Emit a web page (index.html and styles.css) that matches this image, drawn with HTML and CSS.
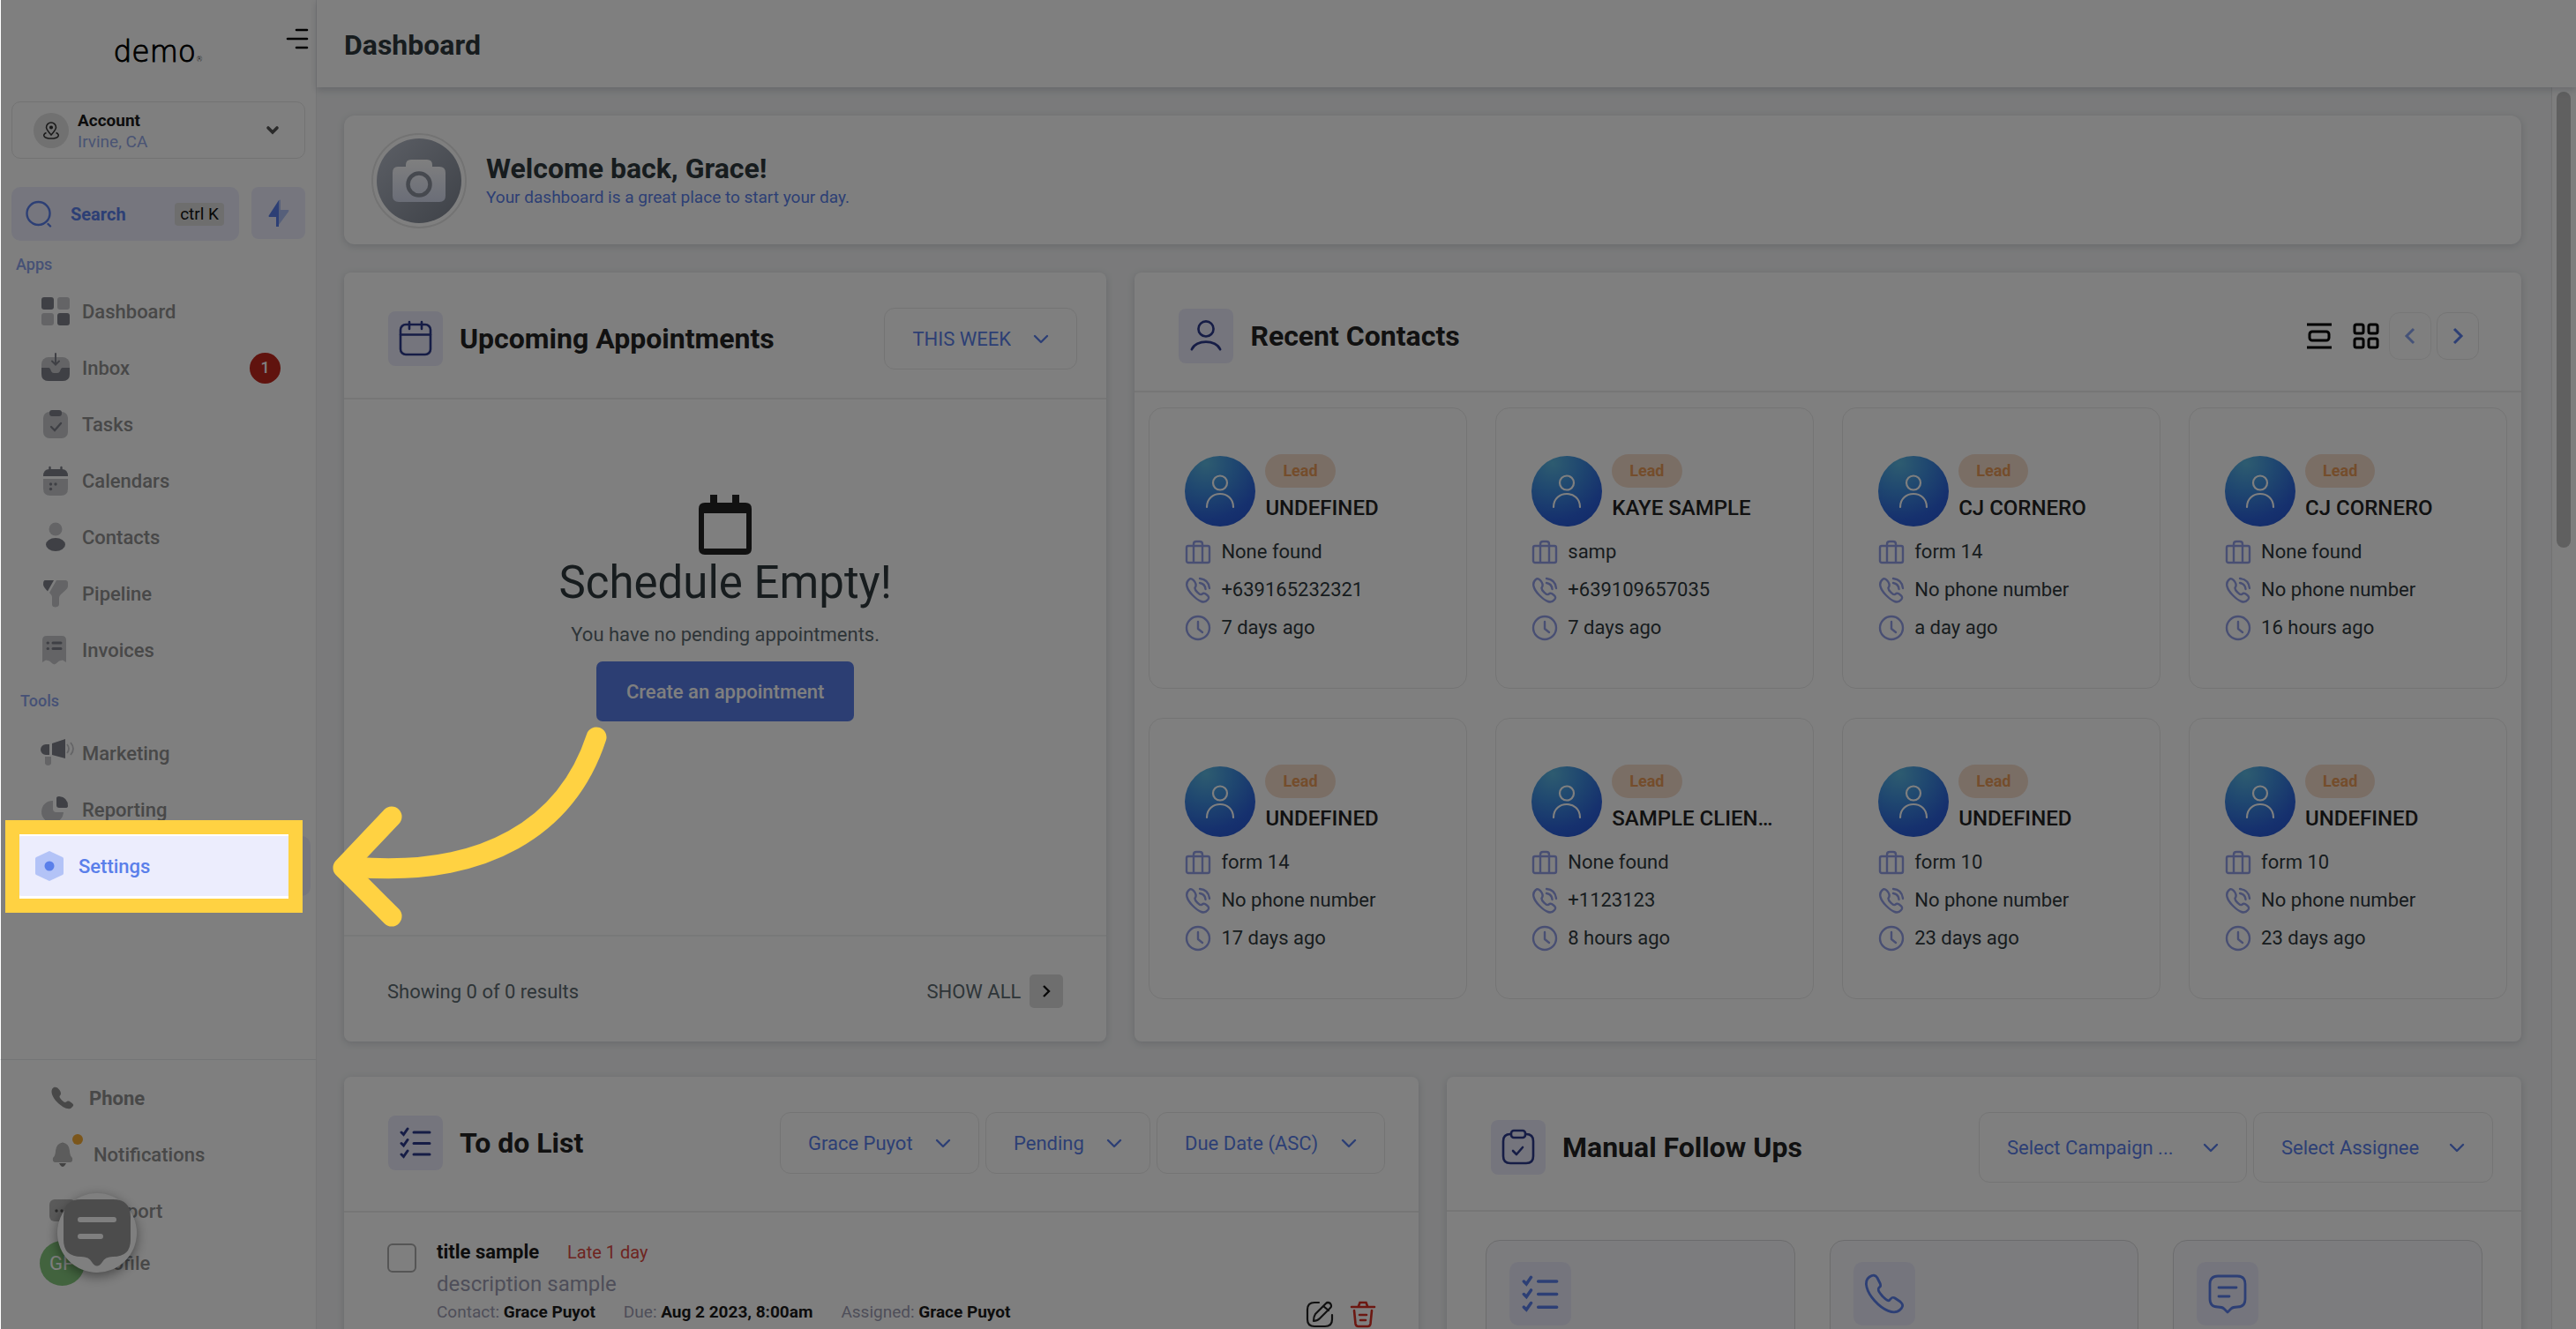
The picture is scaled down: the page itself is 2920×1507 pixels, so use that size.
FILE: index.html
```html
<!DOCTYPE html>
<html lang="en">
<head>
<meta charset="UTF-8">
<meta name="viewport" content="width=device-width, initial-scale=1.0">
<title>Dashboard</title>
<link rel="stylesheet" href="styles.css">
</head>
<body>

<!-- Shared icons -->
<svg class="sprite" width="0" height="0" aria-hidden="true">
  <defs>
    <linearGradient id="camBg" x1="0" y1="0" x2="1" y2="1"><stop offset="0" stop-color="#b9bfcc"/><stop offset="1" stop-color="#7c838f"/></linearGradient>
    <linearGradient id="camBody" x1="0" y1="0" x2="0" y2="1"><stop offset="0" stop-color="#fff"/><stop offset="1" stop-color="#d5dbef"/></linearGradient>
  </defs>
  <symbol id="i-down" viewBox="0 0 18 12"><path d="M2 2l7 7 7-7" fill="none" stroke="currentColor" stroke-width="2.4" stroke-linecap="round" stroke-linejoin="round"/></symbol>
  <symbol id="i-user" viewBox="0 0 40 40"><g fill="none" stroke="currentColor" stroke-linecap="round"><circle cx="20" cy="11.500" r="9"/><path d="M3 36c5-12 29-12 34 0"/></g></symbol>
  <symbol id="i-avatar" viewBox="0 0 34 40"><g fill="none" stroke="currentColor" stroke-width="2.200" stroke-linecap="round"><circle cx="17" cy="10.500" r="8"/><path d="M2 38c0-20 30-20 30 0"/></g></symbol>
  <symbol id="i-case" viewBox="0 0 30 30"><g fill="none" stroke="currentColor" stroke-width="2.400" stroke-linejoin="round"><rect x="2" y="8" width="26" height="19" rx="2"/><path d="M10 27V6q0-3 3-3h4q3 0 3 3v21"/></g></symbol>
  <symbol id="i-call" viewBox="0 0 30 30"><g fill="none" stroke="currentColor" stroke-width="2.400" stroke-linecap="round" stroke-linejoin="round"><path d="M5 3c-5 4-3 11 4 18s13 10 17 5c2-2 1-4-1-5.500-3-2.500-4-2-6-.5-2 1-8-5-7.500-7.500 2-2.500 1.500-4 0-6.500S7 1 5 3z"/><path d="M17 2q10 1 11 11M17 7q6 1 6.500 7"/></g></symbol>
  <symbol id="i-clock" viewBox="0 0 30 30"><g fill="none" stroke="currentColor" stroke-width="2.400" stroke-linecap="round" stroke-linejoin="round"><circle cx="15" cy="15" r="13"/><path d="M15 8v8l5 4"/></g></symbol>
  <symbol id="i-checks" viewBox="0 0 36 36"><g fill="none" stroke="currentColor" stroke-width="3" stroke-linecap="round"><path d="M16 6h18M16 18.500h18M16 31h18"/><path d="M2 6l2.500 2.500L9 2M2 18.500L4.500 21 9 14.500M2 31l2.500 2.500L9 27"/></g></symbol>
</svg>

<div class="app">
  <aside class="sidebar">
    <div class="brand">
      <span class="logo">demo<sup>®</sup></span>
      <button class="menu-toggle" aria-label="Collapse menu">
        <svg width="24" height="26" viewBox="0 0 24 26"><path d="M11 3h12M1 13h22M11 23h12" stroke="#000" stroke-width="2.600" stroke-linecap="round"/></svg>
      </button>
    </div>

    <button class="account">
      <span class="account-pin">
        <svg width="20" height="20" viewBox="0 0 20 20" fill="none" stroke="#333" stroke-width="1.500"><path d="M10 15C6 10.500 4.500 8.500 4.500 6.500a5.500 5.500 0 0 1 11 0C15.500 8.500 14 10.500 10 15z"/><circle cx="10" cy="6.500" r="1.300" fill="#333"/><path d="M4.500 12.500C-1 15 2 19 10 19s11-4 5.500-6.500"/></svg>
      </span>
      <span class="account-text"><strong>Account</strong><span>Irvine, CA</span></span>
      <svg width="16" height="12" viewBox="0 0 16 12"><path d="M3 3l5 5 5-5" fill="none" stroke="#555" stroke-width="3.600" stroke-linecap="round"/></svg>
    </button>

    <div class="search-row">
      <button class="search">
        <svg width="30" height="30" viewBox="0 0 30 30" fill="none" stroke="#5a7fea" stroke-width="2.400" stroke-linecap="round"><circle cx="14.500" cy="14" r="13"/><path d="M25.500 26l2.500 2.500"/></svg>
        <span>Search</span>
        <kbd>ctrl K</kbd>
      </button>
      <button class="quick" aria-label="Quick actions">
        <svg width="24" height="32" viewBox="0 0 24 32"><path d="M12 1v30H9V20H1q-1-1 0-2z" fill="#5a7fea"/><path d="M12 1q2-1 2 0v11h9q1 1 0 2L12 29z" fill="#adbff5"/></svg>
      </button>
    </div>

    <h2 class="group-title">Apps</h2>
    <nav class="nav">
      <a href="#"><svg viewBox="0 0 32 32"><rect width="14" height="14" rx="3" fill="#7f818b"/><rect x="18" width="14" height="14" rx="3" fill="#c8c9cc"/><rect y="18" width="14" height="14" rx="3" fill="#c8c9cc"/><rect x="18" y="18" width="14" height="14" rx="3" fill="#7f818b"/></svg>Dashboard</a>
      <a href="#"><svg viewBox="0 0 32 32"><rect y="4" width="32" height="27" rx="8" fill="#c8c9cc"/><path d="M0 16h8q2 0 3 4 1 2 3 2h4q2 0 3-2 1-4 3-4h8v7q0 8-8 8H8q-8 0-8-8z" fill="#7f818b"/><path d="M16 0v12M12 8.500l4 4 4-4" stroke="#7f818b" stroke-width="2" fill="none" stroke-linecap="round"/></svg>Inbox<span class="badge">1</span></a>
      <a href="#"><svg viewBox="0 0 32 32"><rect x="2" y="2" width="28" height="30" rx="7" fill="#c8c9cc"/><rect x="9" y="0" width="14" height="7" rx="3" fill="#7f818b"/><path d="M11 19l4 4 7-8" stroke="#7f818b" stroke-width="2.400" fill="none" stroke-linecap="round"/></svg>Tasks</a>
      <a href="#"><svg viewBox="0 0 32 32"><path d="M2 14h28v11q0 8-8 8H10q-8 0-8-8z" fill="#c8c9cc"/><path d="M2 11q0-8 7-8h14q7 0 7 8z" fill="#7f818b"/><path d="M9.500 1v4M22.500 1v4" stroke="#7f818b" stroke-width="2.400" stroke-linecap="round"/><g fill="#7f818b"><circle cx="10.500" cy="20" r="1.700"/><circle cx="16" cy="20" r="1.700"/><circle cx="10.500" cy="25.500" r="1.700"/></g></svg>Calendars</a>
      <a href="#"><svg viewBox="0 0 32 32"><circle cx="16" cy="7" r="7.500" fill="#c8c9cc"/><ellipse cx="16" cy="24.500" rx="11" ry="7.500" fill="#7f818b"/></svg>Contacts</a>
      <a href="#"><svg viewBox="0 0 32 32"><path d="M4 1h10L7 13.500q-5-5-5-8Q2 1 4 1z" fill="#7f818b"/><path d="M17 1h10q3 0 3 3v4q0 2-3 4.500l-5 4.500q-2 2-2 4v7q0 3-4 3.500-4 0-4-3V20q0-2-3-5z" fill="#c8c9cc"/></svg>Pipeline</a>
      <a href="#"><svg viewBox="0 0 32 32"><path d="M1 5q0-5 5-5h17q5 0 5 5v25l-4-2.500-4 1-3.500 3-2 1-2-1-3.500-3-4-1-4 2.500z" fill="#c8c9cc"/><path d="M13 8h9M13 14.500h9M7 8h.5M7 14.500h.5" stroke="#7f818b" stroke-width="3" stroke-linecap="round"/></svg>Invoices</a>
    </nav>

    <h2 class="group-title tools">Tools</h2>
    <nav class="nav">
      <a href="#"><svg viewBox="0 0 32 32"><path d="M9 6v12H5a6 6 0 0 1 0-12zM12 5l15-5v22l-15-4z" fill="#7f818b"/><path d="M4 20h7v8q-1 2-3.500 2T4 28z" fill="#c8c9cc"/><path d="M29 6q4 5 0 10M33 4q6 7 0 14" stroke="#c8c9cc" stroke-width="1.800" fill="none"/></svg>Marketing</a>
      <a href="#"><svg viewBox="0 0 32 32"><path d="M13 6v9q0 4 4 4h8A12.500 12.500 0 1 1 13 6z" fill="#c8c9cc"/><path d="M17 3q0-2 3-2 10 1 10 11 0 2-3 2h-7q-3 0-3-3z" fill="#7f818b"/></svg>Reporting</a>
      <a href="#" class="active"><svg viewBox="0 0 32 34"><path d="M16 0l15 7q1 .5 1 2v16q0 1.500-1 2l-15 7-15-7q-1-.5-1-2V9q0-1.500 1-2z" fill="#b3c3f7"/><circle cx="16" cy="17" r="5.500" fill="#5a7fea"/></svg>Settings</a>
    </nav>

    <nav class="nav-bottom">
      <a href="#" class="phone"><span class="slot"><svg width="26" height="26" viewBox="0 0 26 26"><path d="M3 1C-2 4 1 12 7 18s14 10 17 5c3-2 0-4-3-6-2-1-3 0-5 1-2 0-7-5-6.500-7 2-2 2-4 0-7S5 0 3 1z" fill="#909090"/></svg></span>Phone</a>
      <a href="#"><span class="slot bell"><svg width="24" height="28" viewBox="0 0 24 28"><path d="M8 4q4-7 8 0zM8 24h8q-4 8-8 0z" fill="#858585"/><path d="M4 10q1-9 8-9t8 9q0 5 3 8 1 5-3 5H4q-4 0-3-5 3-3 3-8z" fill="#b8b8b8"/></svg></span>Notifications</a>
      <a href="#"><span class="slot"><svg width="30" height="26" viewBox="0 0 30 26"><rect width="30" height="25" rx="6" fill="#b4b4b4"/><g fill="#555"><circle cx="8" cy="13" r="1.700"/><circle cx="14" cy="13" r="1.700"/><circle cx="20" cy="13" r="1.700"/></g></svg></span>Support</a>
      <a href="#"><span class="slot initials">GP</span>Profile</a>
    </nav>
    <button class="chat" aria-label="Open chat">
      <svg width="76" height="76" viewBox="0 0 76 76"><path d="M20 0h36q20 0 20 20v26q0 19-20 19-9 0-12 6-6 9-12 0-3-6-12-6Q0 65 0 46V20Q0 0 20 0z" fill="#999"/><path d="M19 23h38M19 42h23" stroke="#fff" stroke-width="6" stroke-linecap="round"/></svg>
    </button>
  </aside>

  <div class="main">
    <header class="topbar"><h1>Dashboard</h1></header>
    <div class="scroller">
      <main class="content">

        <section class="card welcome">
          <div class="photo">
            <svg width="96" height="96" viewBox="0 0 96 96"><circle cx="48" cy="48" r="48" fill="url(#camBg)"/><path d="M24 32h9v-2q0-6 6-6h18q6 0 6 6v2h8q7 0 7 7v26q0 7-7 7H25q-7 0-7-7V39q0-7 6-7z" fill="url(#camBody)"/><circle cx="48" cy="52" r="12.500" fill="none" stroke="#8d939f" stroke-width="4.500"/></svg>
          </div>
          <div>
            <h2>Welcome back, Grace!</h2>
            <p>Your dashboard is a great place to start your day.</p>
          </div>
        </section>

        <div class="row top-row">
          <section class="card appointments">
            <header class="card-head">
              <span class="tile"><svg width="38" height="40" viewBox="0 0 38 40" fill="none" stroke="#2d3a8c" stroke-width="2.600" stroke-linecap="round"><rect x="2" y="4" width="34" height="34" rx="6"/><path d="M2 15.500h34M12 1v8M26 1v8"/></svg></span>
              <h2>Upcoming Appointments</h2>
              <div class="filters">
                <label class="pick"><select aria-label="Period"><option>THIS WEEK</option></select><svg><use href="#i-down"/></svg></label>
              </div>
            </header>
            <div class="empty">
              <svg width="60" height="68" viewBox="0 0 60 68"><path d="M13 0h8v9h17V0h8v9h7q7 0 7 7v45q0 7-7 7H7q-7 0-7-7V16q0-7 7-7h6zM6 21v40h48V21z" fill="#222"/></svg>
              <h3>Schedule Empty!</h3>
              <p>You have no pending appointments.</p>
              <button class="primary">Create an appointment</button>
            </div>
            <footer class="card-foot">
              <span>Showing 0 of 0 results</span>
              <span class="show-all">SHOW ALL
                <button aria-label="Show all"><svg width="10" height="14" viewBox="0 0 10 14"><path d="M2 1l6 6-6 6" fill="none" stroke="#111" stroke-width="2.400"/></svg></button>
              </span>
            </footer>
          </section>

          <section class="card contacts">
            <header class="card-head">
              <span class="tile"><svg width="38" height="38" stroke-width="2.800"><use href="#i-user"/></svg></span>
              <h2>Recent Contacts</h2>
              <div class="views">
                <button class="view" aria-label="List view"><svg width="30" height="30" viewBox="0 0 30 30" fill="none" stroke="#000" stroke-width="3"><path d="M1 2h28M1 28h28"/><rect x="4" y="10" width="22" height="10" rx="3"/></svg></button>
                <button class="view" aria-label="Grid view"><svg width="30" height="30" viewBox="0 0 30 30" fill="none" stroke="#000" stroke-width="3"><rect x="2" y="2" width="10" height="10" rx="2"/><rect x="18" y="2" width="10" height="10" rx="2"/><rect x="2" y="18" width="10" height="10" rx="2"/><rect x="18" y="18" width="10" height="10" rx="2"/></svg></button>
                <button class="page prev" aria-label="Previous"><svg width="12" height="20" viewBox="0 0 12 20"><path d="M10 2l-8 8 8 8" fill="none" stroke="#5a7fea" stroke-width="3"/></svg></button>
                <button class="page" aria-label="Next"><svg width="12" height="20" viewBox="0 0 12 20"><path d="M2 2l8 8-8 8" fill="none" stroke="#5a7fea" stroke-width="3"/></svg></button>
              </div>
            </header>
            <div class="contact-grid">
              <article class="contact">
                <div class="who"><span class="face"><svg><use href="#i-avatar"/></svg></span><div><span class="lead">Lead</span><h3>UNDEFINED</h3></div></div>
                <ul><li><svg><use href="#i-case"/></svg>None found</li><li><svg><use href="#i-call"/></svg>+639165232321</li><li><svg><use href="#i-clock"/></svg>7 days ago</li></ul>
              </article>
              <article class="contact">
                <div class="who"><span class="face"><svg><use href="#i-avatar"/></svg></span><div><span class="lead">Lead</span><h3>KAYE SAMPLE</h3></div></div>
                <ul><li><svg><use href="#i-case"/></svg>samp</li><li><svg><use href="#i-call"/></svg>+639109657035</li><li><svg><use href="#i-clock"/></svg>7 days ago</li></ul>
              </article>
              <article class="contact">
                <div class="who"><span class="face"><svg><use href="#i-avatar"/></svg></span><div><span class="lead">Lead</span><h3>CJ CORNERO</h3></div></div>
                <ul><li><svg><use href="#i-case"/></svg>form 14</li><li><svg><use href="#i-call"/></svg>No phone number</li><li><svg><use href="#i-clock"/></svg>a day ago</li></ul>
              </article>
              <article class="contact">
                <div class="who"><span class="face"><svg><use href="#i-avatar"/></svg></span><div><span class="lead">Lead</span><h3>CJ CORNERO</h3></div></div>
                <ul><li><svg><use href="#i-case"/></svg>None found</li><li><svg><use href="#i-call"/></svg>No phone number</li><li><svg><use href="#i-clock"/></svg>16 hours ago</li></ul>
              </article>
              <article class="contact">
                <div class="who"><span class="face"><svg><use href="#i-avatar"/></svg></span><div><span class="lead">Lead</span><h3>UNDEFINED</h3></div></div>
                <ul><li><svg><use href="#i-case"/></svg>form 14</li><li><svg><use href="#i-call"/></svg>No phone number</li><li><svg><use href="#i-clock"/></svg>17 days ago</li></ul>
              </article>
              <article class="contact">
                <div class="who"><span class="face"><svg><use href="#i-avatar"/></svg></span><div><span class="lead">Lead</span><h3>SAMPLE CLIEN…</h3></div></div>
                <ul><li><svg><use href="#i-case"/></svg>None found</li><li><svg><use href="#i-call"/></svg>+1123123</li><li><svg><use href="#i-clock"/></svg>8 hours ago</li></ul>
              </article>
              <article class="contact">
                <div class="who"><span class="face"><svg><use href="#i-avatar"/></svg></span><div><span class="lead">Lead</span><h3>UNDEFINED</h3></div></div>
                <ul><li><svg><use href="#i-case"/></svg>form 10</li><li><svg><use href="#i-call"/></svg>No phone number</li><li><svg><use href="#i-clock"/></svg>23 days ago</li></ul>
              </article>
              <article class="contact">
                <div class="who"><span class="face"><svg><use href="#i-avatar"/></svg></span><div><span class="lead">Lead</span><h3>UNDEFINED</h3></div></div>
                <ul><li><svg><use href="#i-case"/></svg>form 10</li><li><svg><use href="#i-call"/></svg>No phone number</li><li><svg><use href="#i-clock"/></svg>23 days ago</li></ul>
              </article>
            </div>
          </section>
        </div>

        <div class="row bottom-row">
          <section class="card todo">
            <header class="card-head">
              <span class="tile"><svg width="36" height="36"><use href="#i-checks"/></svg></span>
              <h2>To do List</h2>
              <div class="filters">
                <label class="pick"><select aria-label="Assignee"><option>Grace Puyot</option></select><svg><use href="#i-down"/></svg></label>
                <label class="pick"><select aria-label="Status"><option>Pending</option></select><svg><use href="#i-down"/></svg></label>
                <label class="pick"><select aria-label="Sort by"><option>Due Date (ASC)</option></select><svg><use href="#i-down"/></svg></label>
              </div>
            </header>
            <div class="task">
              <input type="checkbox" id="task-1">
              <div class="task-text">
                <div class="task-title"><label for="task-1">title sample</label><span class="late">Late 1 day</span></div>
                <p>description sample</p>
                <div class="task-meta"><span>Contact: <b>Grace Puyot</b></span><span>Due: <b>Aug 2 2023, 8:00am</b></span><span>Assigned: <b>Grace Puyot</b></span></div>
              </div>
              <div class="task-actions">
                <button aria-label="Edit task"><svg width="30" height="30" viewBox="0 0 30 30" fill="none" stroke="#222" stroke-width="2.200" stroke-linecap="round" stroke-linejoin="round"><path d="M14 2H9Q1 2 1 10v11q0 8 8 8h12q8 0 8-8v-5"/><path d="M22 3q2-2 5 0 2 3 0 5L15 20q-3 3-7 3 0-5 2-8zM19 6l6 5"/></svg></button>
                <button aria-label="Delete task"><svg width="28" height="30" viewBox="0 0 28 30" fill="none" stroke="#d93025" stroke-width="2.600" stroke-linecap="round"><path d="M1 7h26M9 6l1.500-4h7L19 6M4 11l1.500 15q.5 3 3 3h11q2.500 0 3-3L24 11M10 16h8M11 22h6"/></svg></button>
              </div>
            </div>
          </section>

          <section class="card followups">
            <header class="card-head">
              <span class="tile"><svg width="36" height="40" viewBox="0 0 36 40" fill="none" stroke="#2d3a8c" stroke-width="2.600" stroke-linecap="round" stroke-linejoin="round"><path d="M9 5q-8 0-8 8v17q0 8 8 8h18q8 0 8-8V13q0-8-8-8"/><rect x="10" y="1" width="16" height="8" rx="3"/><path d="M12 24l4 4 7-8"/></svg></span>
              <h2>Manual Follow Ups</h2>
              <div class="filters tall">
                <label class="pick"><select aria-label="Campaign"><option>Select Campaign ...</option></select><svg><use href="#i-down"/></svg></label>
                <label class="pick"><select aria-label="Assignee"><option>Select Assignee</option></select><svg><use href="#i-down"/></svg></label>
              </div>
            </header>
            <div class="follow-grid">
              <div class="follow"><span class="tile big"><svg width="42" height="42"><use href="#i-checks"/></svg></span></div>
              <div class="follow"><span class="tile big"><svg width="44" height="44" viewBox="0 0 44 44" fill="none" stroke="#5a7fea" stroke-width="2.800" stroke-linejoin="round"><path d="M5 3C-2 8 2 20 11 30s22 17 29 10c4-4 3-6 0-9l-6-4c-3-2-4 0-6 2-1 2-4 0-8-4-5-6-6-8-4-10 2-1 2-3 1-5l-3-6q-3-5-9-1z"/></svg></span></div>
              <div class="follow"><span class="tile big"><svg width="44" height="44" viewBox="0 0 44 44" fill="none" stroke="#5a7fea" stroke-width="2.800" stroke-linecap="round" stroke-linejoin="round"><path d="M11 2h22q9 0 9 9v17q0 9-9 9-5 0-7 2l-4 4-4-4q-2-2-7-2-9 0-9-9V11q0-9 9-9z"/><path d="M12 15h20M12 25h12"/></svg></span></div>
            </div>
          </section>
        </div>
      </main>
      <div class="scrollbar"><div class="thumb"></div></div>
    </div>
  </div>
</div>

<!-- Guided tour: dims the page and points at Settings -->
<div class="tour">
  <div class="spotlight"></div>
  <svg class="arrow" width="330" height="240" viewBox="370 820 330 240" fill="none" stroke="#ffd242" stroke-width="23" stroke-linecap="round" stroke-linejoin="round">
    <path d="M676 836C643 937 550 996 400 983"/>
    <path d="M444 926l-55 58 55 55"/>
  </svg>
</div>

</body>
</html>
```

FILE: styles.css
```css
* {
  box-sizing: border-box;
}
body {
  margin: 0;
  font-family: Roboto, Arial, sans-serif;
  font-size: 22px;
  color: #2f393d;
  background: #fff;
  overflow: hidden;
}
h1, h2, h3, p, ul {
  margin: 0;
  padding: 0;
}
ul {
  list-style: none;
}
button {
  font-family: inherit;
  font-size: inherit;
  border: none;
  background: none;
  padding: 0;
  cursor: pointer;
}
a {
  text-decoration: none;
}
svg {
  display: block;
  flex: none;
  overflow: visible;
}
.sprite {
  position: absolute;
}
.app {
  display: flex;
  height: 100vh;
}

/* Sidebar */
.sidebar {
  width: 359px;
  flex: none;
  display: flex;
  flex-direction: column;
  border-right: 1px solid #eaebed;
  position: relative;
}
.brand {
  display: flex;
  justify-content: flex-end;
  align-items: flex-start;
  gap: 95px;
  height: 115px;
  padding: 31px 9px 0 0;
}
.logo {
  font-family: "DejaVu Sans", sans-serif;
  font-weight: 200;
  font-size: 33px;
  line-height: 56px;
  color: #000;
  -webkit-text-stroke: 1px #000;
}
.logo sup {
  font-size: 8px;
  vertical-align: baseline;
  -webkit-text-stroke: 0;
}
.account {
  display: flex;
  align-items: center;
  height: 65px;
  margin: 0 12px 0 13px;
  padding: 0 28px 0 24px;
  border: 1px solid #e6e6e6;
  border-radius: 10px;
  text-align: left;
}
.account-pin {
  display: flex;
  align-items: center;
  justify-content: center;
  width: 40px;
  height: 40px;
  border-radius: 50%;
  background: #e2e2e2;
}
.account-text {
  flex: 1;
  display: flex;
  flex-direction: column;
  margin-left: 10px;
  padding-top: 2px;
  font-size: 19px;
  line-height: 24px;
  color: #94a8e8;
}
.account-text strong {
  color: #1a1a1a;
}
.search-row {
  display: flex;
  gap: 14px;
  margin: 32px 12px 0 13px;
}
.search {
  flex: 1;
  display: flex;
  align-items: center;
  height: 61px;
  padding: 0 17px 0 16px;
  border-radius: 10px;
  background: #ecedfd;
  color: #5a7fea;
  font-size: 20px;
  font-weight: 700;
}
.search span {
  flex: 1;
  margin-left: 21px;
  text-align: left;
}
.search kbd {
  padding: 0 6px;
  border-radius: 4px;
  background: #dcdcdc;
  color: #111;
  font-family: inherit;
  font-size: 19px;
  font-weight: 400;
  line-height: 26px;
}
.quick {
  display: flex;
  align-items: center;
  justify-content: center;
  width: 61px;
  height: 59px;
  border-radius: 8px;
  background: #ecedfd;
}
.group-title {
  margin: 15px 0 7px 18px;
  font-size: 18px;
  font-weight: 500;
  line-height: 24px;
  color: #8ca3ec;
}
.group-title.tools {
  margin: 12px 0 13px 23px;
}
.nav a {
  display: flex;
  align-items: center;
  gap: 14px;
  height: 68px;
  margin: 0 6px -4px 14px;
  padding-left: 33px;
  border-radius: 10px;
  color: #909090;
  font-weight: 500;
}
.nav a:last-child {
  margin-bottom: 0;
}
.nav svg {
  width: 32px;
  height: 32px;
}
.nav .active {
  gap: 17px;
  padding-left: 26px;
  background: #ecedfd;
  color: #5a7fea;
}
.nav .active svg {
  height: 34px;
}
.badge {
  width: 35px;
  height: 35px;
  margin: 0 34px 0 auto;
  border-radius: 50%;
  background: #c0261c;
  color: #fff;
  font-size: 18px;
  line-height: 34px;
  text-align: center;
}
.nav-bottom {
  margin-top: auto;
  padding: 11px 0 43px 45px;
  border-top: 1px solid #e9eaec;
}
.nav-bottom a {
  display: flex;
  align-items: center;
  gap: 10px;
  height: 64px;
  color: #909090;
  font-weight: 500;
}
.nav-bottom .phone {
  gap: 5px;
  font-weight: 700;
}
.nav-bottom a:last-child {
  margin-top: -5px;
}
.slot {
  position: relative;
  display: flex;
  align-items: center;
  justify-content: center;
  width: 51px;
  height: 51px;
}
.bell::after {
  content: '';
  position: absolute;
  top: 2px;
  right: 2px;
  width: 12px;
  height: 12px;
  border-radius: 50%;
  background: #f6ad37;
}
.initials {
  border-radius: 50%;
  background: #84c77d;
  color: #fff;
  font-weight: 400;
}
.chat {
  position: absolute;
  left: 65px;
  bottom: 64px;
  display: flex;
  align-items: center;
  justify-content: center;
  width: 90px;
  height: 90px;
  border-radius: 50%;
  background: #fff;
  box-shadow: 0 4px 14px rgba(0, 0, 0, 0.45);
}

/* Main area */
.main {
  flex: 1;
  min-width: 0;
  display: flex;
  flex-direction: column;
  background: #f4f5f6;
}
.topbar {
  position: relative;
  height: 99px;
  flex: none;
  padding: 30px 31px;
  background: #fff;
  box-shadow: 0 3px 8px rgba(60, 70, 90, 0.22);
}
.topbar h1 {
  font-size: 32px;
  line-height: 42px;
}
.scroller {
  flex: 1;
  min-height: 0;
  display: flex;
}
.content {
  flex: 1;
  min-width: 0;
  padding: 32px 34px 0 31px;
  overflow: hidden;
}
.scrollbar {
  width: 28px;
  padding: 5px;
  background: #fdfdfd;
  border-left: 1px solid #e4e4e4;
}
.thumb {
  width: 16px;
  height: 37%;
  border-radius: 8px;
  background: #c0c0c0;
}
.card {
  background: #fff;
  border-radius: 8px;
  box-shadow: 0 2px 8px rgba(60, 70, 90, 0.2);
}
.row {
  display: grid;
  gap: 32px;
  margin-top: 32px;
}
.top-row {
  grid-template-columns: 55fr 100fr;
}
.bottom-row {
  grid-template-columns: 1fr 1fr;
  margin-top: 40px;
}
.welcome {
  display: flex;
  align-items: center;
  gap: 22px;
  padding: 20px 31px 18px;
  border-radius: 12px;
}
.photo {
  padding: 4px;
  border: 2px solid #e6e6e6;
  border-radius: 50%;
}
.photo svg {
  width: 96px;
  height: 96px;
}
.welcome h2 {
  font-size: 32px;
  line-height: 38px;
}
.welcome p {
  font-size: 19px;
  line-height: 28px;
  color: #5a7fea;
}

.card-head {
  display: flex;
  align-items: center;
  padding: 40px 33px 32px 50px;
  border-bottom: 2px solid #ececec;
}
.card-head h2 {
  flex: 1;
  margin-left: 19px;
  font-size: 32px;
  line-height: 42px;
  color: #222;
}
.tile {
  display: flex;
  align-items: center;
  justify-content: center;
  width: 62px;
  height: 62px;
  border-radius: 8px;
  background: #ebebfb;
  color: #2d3a8c;
}
.filters {
  display: flex;
  gap: 7px;
}
.pick {
  position: relative;
}
.pick select {
  appearance: none;
  height: 70px;
  padding: 0 74px 0 31px;
  border: 1px solid #e9e9e9;
  border-radius: 12px;
  background: none;
  color: #5a7fea;
  font-family: inherit;
  font-size: 22px;
}
.pick svg {
  position: absolute;
  right: 32px;
  top: 50%;
  width: 18px;
  height: 12px;
  margin-top: -5px;
  color: #5a7fea;
  pointer-events: none;
}
.filters.tall select {
  height: 80px;
  padding-right: 82px;
}

/* Appointments */
.appointments {
  display: flex;
  flex-direction: column;
}
.empty {
  flex: 1;
  display: flex;
  flex-direction: column;
  align-items: center;
  padding-top: 108px;
}
.empty h3 {
  margin-top: 2px;
  font-size: 51px;
  font-weight: 400;
  line-height: 60px;
}
.empty p {
  margin: 14px 0 15px;
  line-height: 30px;
  color: #5c6a70;
}
.primary {
  height: 68px;
  padding: 0 34px;
  border-radius: 7px;
  background: #587ce6;
  color: #fff;
  font-weight: 500;
}
.card-foot {
  display: flex;
  justify-content: space-between;
  align-items: center;
  padding: 43px 49px 38px;
  border-top: 2px solid #f0f2f2;
  color: #5c6a70;
}
.show-all {
  display: flex;
  align-items: center;
  gap: 10px;
}
.show-all button {
  display: flex;
  align-items: center;
  justify-content: center;
  width: 38px;
  height: 38px;
  border-radius: 5px;
  background: #dcdcdc;
}

/* Contacts */
.contacts .card-head {
  padding: 41px 48px 31px 50px;
}
.views {
  display: flex;
  align-items: center;
}
.view {
  margin-right: 23px;
}
.view + .view {
  margin-right: 11px;
}
.page {
  display: flex;
  align-items: center;
  justify-content: center;
  width: 48px;
  height: 54px;
  border: 1px solid #e9e9e9;
  border-radius: 12px;
}
.prev {
  margin-right: 6px;
  opacity: 0.7;
}
.contact-grid {
  display: grid;
  grid-template-columns: repeat(4, 1fr);
  gap: 33px 32px;
  padding: 17px 16px 48px;
}
.contact {
  min-width: 0;
  padding: 52px 20px 47px 40px;
  border: 1px solid #e9e9e9;
  border-radius: 16px;
}
.who {
  display: flex;
  align-items: center;
  gap: 11px;
}
.face {
  display: flex;
  align-items: center;
  justify-content: center;
  width: 80px;
  height: 80px;
  border-radius: 50%;
  background: radial-gradient(circle at 30% 10%, #5cb8e0, #3f8fe0 35%, #2c62dc 70%, #2450d0);
  color: #fff;
}
.face svg {
  width: 34px;
  height: 40px;
}
.lead {
  display: inline-block;
  padding: 0 20px;
  border-radius: 19px;
  background: #f5dccb;
  color: #e89a58;
  font-size: 18px;
  font-weight: 700;
  line-height: 38px;
  vertical-align: top;
}
.who h3 {
  font-size: 24px;
  font-weight: 500;
  line-height: 46px;
  color: #222;
  white-space: nowrap;
}
.contact ul {
  margin-top: 5px;
}
.contact li {
  display: flex;
  align-items: center;
  gap: 11px;
  height: 43px;
}
.contact li svg {
  width: 30px;
  height: 30px;
  color: #929fe6;
}

/* To do list */
.todo .card-head {
  padding: 40px 38px 42px 50px;
}
.task {
  display: flex;
  padding: 31px 49px 40px;
}
.task input {
  appearance: none;
  width: 33px;
  height: 33px;
  margin: 4px 23px 0 0;
  border: 2px solid #aaa;
  border-radius: 6px;
}
.task-text {
  flex: 1;
}
.task-title {
  display: flex;
  align-items: center;
  gap: 32px;
  line-height: 28px;
  font-weight: 700;
  color: #1a1a1a;
}
.late {
  color: #dc4a43;
  font-size: 20px;
  font-weight: 400;
}
.task-text p {
  margin-top: 5px;
  font-size: 24px;
  line-height: 34px;
  color: #9c9cb2;
}
.task-meta {
  display: flex;
  gap: 32px;
  font-size: 19px;
  line-height: 30px;
  color: #9c9cb2;
}
.task-meta b {
  color: #1a1a1a;
}
.task-actions {
  display: flex;
  align-items: flex-start;
  gap: 20px;
  padding-top: 69px;
}

/* Manual follow ups */
.followups .card-head {
  padding: 40px 32px 31px 50px;
}
.follow-grid {
  display: grid;
  grid-template-columns: repeat(3, 1fr);
  gap: 39px;
  padding: 32px 44px;
}
.follow {
  height: 200px;
  padding: 24px 26px;
  border: 1px solid #d8d8da;
  border-radius: 16px;
  background: #f9f9fd;
}
.tile.big {
  width: 70px;
  height: 72px;
  border-radius: 10px;
  color: #5a7fea;
}

/* Tour overlay */
.tour {
  position: fixed;
  inset: 0 0 0 1px;
  overflow: hidden;
  pointer-events: none;
}
.spotlight {
  position: absolute;
  left: 5px;
  top: 930px;
  width: 337px;
  height: 105px;
  border: 16px solid #ffd242;
  box-shadow: 0 0 0 4000px rgba(0, 0, 0, 0.5);
}
.arrow {
  position: absolute;
  left: 369px;
  top: 820px;
}
```
